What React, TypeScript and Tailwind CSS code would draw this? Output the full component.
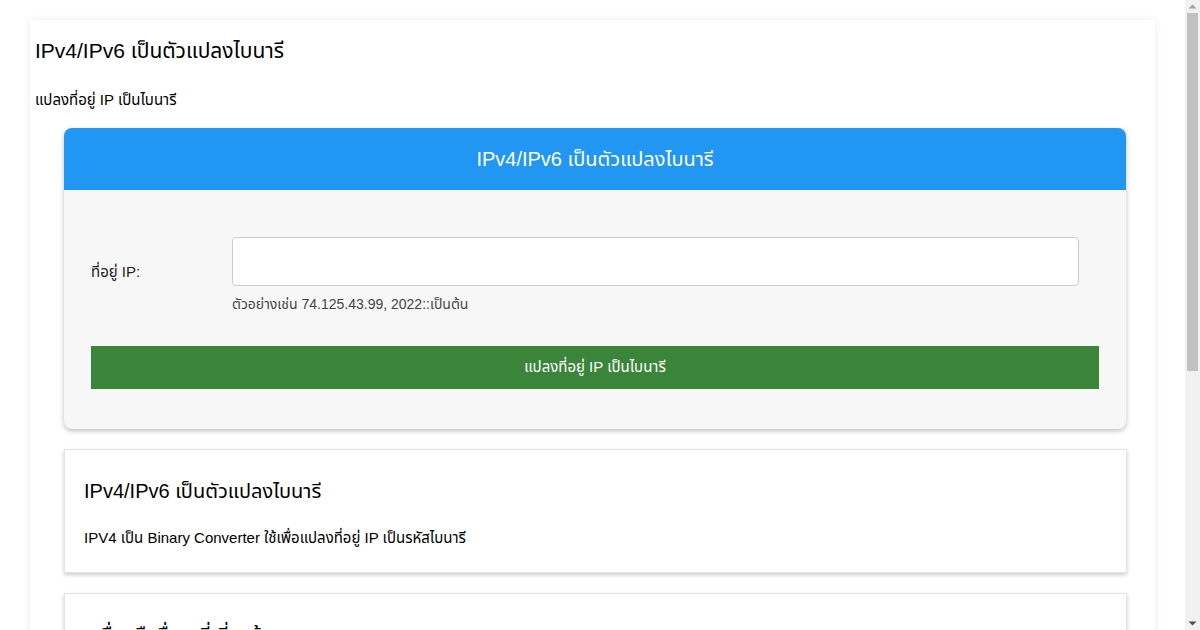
function ScrollBar() {
  return (
    <div className="flex h-full w-[15px] shrink-0 flex-col items-center bg-[#f1f1f1]">
      <svg width="15" height="13" viewBox="0 0 15 13" className="shrink-0">
        <path d="M3.5 8.5 L7.5 4.5 L11.5 8.5 Z" fill="#a3a3a3" />
      </svg>
      <div className="h-[358px] w-[11px] shrink-0 bg-[#c1c1c1]" />
      <div className="flex-1" />
      <svg width="15" height="13" viewBox="0 0 15 13" className="shrink-0">
        <path d="M3.5 4.5 L7.5 8.5 L11.5 4.5 Z" fill="#505050" />
      </svg>
    </div>
  );
}

export default function App() {
  return (
    <div className="flex h-screen overflow-hidden bg-white font-['Liberation_Sans','Noto_Sans_Thai','Noto_Sans_Thai_UI',Arial,sans-serif] text-black">
      <div className="flex-1 overflow-hidden pt-5">
        <div className="mx-auto w-[1125px] bg-white px-[5px] pb-10 shadow-[0_0_8px_rgba(0,0,0,0.08)]">
          <h1 className="pt-[17px] text-[21px] leading-[28px]">IPv4/IPv6 เป็นตัวแปลงไบนารี</h1>
          <p className="mt-[23px] text-[15px] leading-[24px]">แปลงที่อยู่ IP เป็นไบนารี</p>

          {/* เครื่องมือแปลง */}
          <div className="mt-[16px] ml-[29px] w-[1062px] overflow-hidden rounded-lg bg-[#f7f7f7] shadow-[0_2px_5px_rgba(0,0,0,0.25)]">
            <div className="flex h-[62px] items-center justify-center bg-[#2196f3] text-[20px] text-white">
              IPv4/IPv6 เป็นตัวแปลงไบนารี
            </div>
            <div className="px-[27px] pt-[47px] pb-[40px]">
              <div className="flex">
                <label className="w-[141px] pt-[23px] text-[15px] leading-[24px] text-[#222]">ที่อยู่ IP:</label>
                <div className="flex-1 pr-[20px]">
                  <input
                    type="text"
                    className="block h-[49px] w-full rounded border border-[#ccc] bg-white px-3 text-[16px] outline-none"
                  />
                  <p className="mt-[8px] text-[14px] leading-[20px] text-[#444]">ตัวอย่างเช่น 74.125.43.99, 2022::เป็นต้น</p>
                </div>
              </div>
              <button className="mt-[32px] flex h-[43px] w-full items-center justify-center bg-[#3b853b] text-[15px] text-white">
                แปลงที่อยู่ IP เป็นไบนารี
              </button>
            </div>
          </div>

          {/* คำอธิบาย */}
          <div className="mt-[20px] ml-[29px] w-[1063px] border border-[#e3e3e3] bg-white px-[19px] pt-[29px] pb-[22px] shadow-[0_2px_4px_rgba(0,0,0,0.2)]">
            <h2 className="text-[20px] leading-[24px]">IPv4/IPv6 เป็นตัวแปลงไบนารี</h2>
            <p className="mt-[23px] text-[15px] leading-[24px]">IPV4 เป็น Binary Converter ใช้เพื่อแปลงที่อยู่ IP เป็นรหัสไบนารี</p>
          </div>

          <div className="mt-[20px] ml-[29px] w-[1063px] border border-[#e3e3e3] bg-white px-[19px] pt-[29px] pb-[22px] shadow-[0_2px_4px_rgba(0,0,0,0.2)]">
            <h2 className="text-[20px] leading-[24px]">เครื่องมืออื่นๆ ที่เกี่ยวข้อง</h2>
            <p className="mt-[23px] text-[15px] leading-[24px]">IPv4 เป็นตัวแปลงเลขฐานสิบหก</p>
          </div>
        </div>
      </div>
      <ScrollBar />
    </div>
  );
}
